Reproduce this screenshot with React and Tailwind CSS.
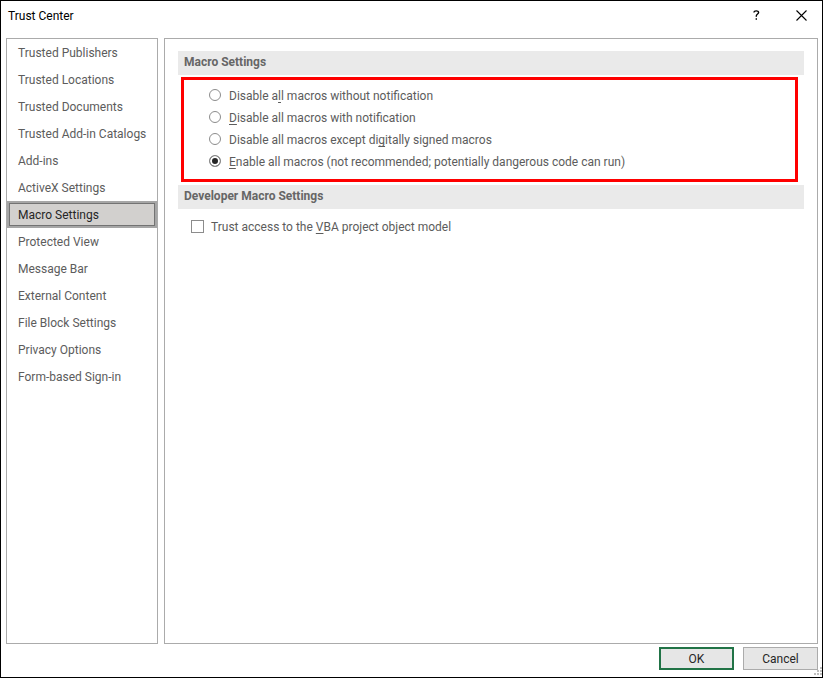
import React, { useState } from "react";

const categories = [
  "Trusted Publishers",
  "Trusted Locations",
  "Trusted Documents",
  "Trusted Add-in Catalogs",
  "Add-ins",
  "ActiveX Settings",
  "Macro Settings",
  "Protected View",
  "Message Bar",
  "External Content",
  "File Block Settings",
  "Privacy Options",
  "Form-based Sign-in",
];

// the access key letter sits between "before" and "after"
const macroOptions = [
  { id: "silent", before: "Disable a", accessKey: "l", after: "l macros without notification" },
  { id: "notify", before: "", accessKey: "D", after: "isable all macros with notification" },
  { id: "signed", before: "Disable all macros except di", accessKey: "g", after: "itally signed macros" },
  { id: "enable", before: "", accessKey: "E", after: "nable all macros (not recommended; potentially dangerous code can run)" },
];

const AccessLabel = ({ before, accessKey, after }) => (
  <span>
    {before}
    <span className="underline underline-offset-2 [text-decoration-skip-ink:none]">{accessKey}</span>
    {after}
  </span>
);

const SectionTitle = ({ children }) => (
  <h2 className="h-6 px-1.5 bg-[#eaeaea] font-bold leading-[22px] text-[#666666]">{children}</h2>
);

const App = () => {
  const [category, setCategory] = useState("Macro Settings");
  const [macro, setMacro] = useState("enable");
  const [trustVba, setTrustVba] = useState(false);

  return (
    <div className="relative min-h-screen flex flex-col border border-black bg-white pl-[5px] pr-1 pb-[7px] font-['Roboto','Open_Sans',sans-serif] text-[12px] leading-4 text-[#5c5c5c]">
      <header className="h-[37px] flex items-start justify-between text-black">
        <h1 className="pl-0.5 pt-[7px]">Trust Center</h1>
        <div className="flex">
          <button type="button" aria-label="Help" className="w-[55px] h-7 flex items-center justify-center">
            <svg width="7" height="10" viewBox="0 0 7 10" fill="none" stroke="currentColor" strokeWidth="1.4">
              <path d="M1 2.6C1 1.4 1.9.9 3.2.9S5.6 1.5 5.6 2.6C5.6 4 3.3 4.2 3.3 6v.8" />
              <path d="M3.3 8.2v1.6" />
            </svg>
          </button>
          <button type="button" aria-label="Close" className="w-[34px] h-7 flex items-center justify-center">
            <svg width="11" height="11" viewBox="0 0 11 11" fill="none" stroke="currentColor" strokeWidth="1.1">
              <path d="M.5.5l10 10M10.5.5l-10 10" />
            </svg>
          </button>
        </div>
      </header>

      <div className="flex-1 flex gap-1.5">
        <nav className="w-[152px] shrink-0 flex flex-col border border-[#ababab]">
          {categories.map((name) => (
            <button
              key={name}
              type="button"
              onClick={() => setCategory(name)}
              className={
                name === category
                  ? "h-[27px] border-2 border-[#a6a6a6] bg-[#d2d0ce] text-left text-[#262626]"
                  : "h-[27px] border-2 border-transparent text-left"
              }
            >
              <span
                className={
                  name === category
                    ? "h-full flex items-center border border-[#737373] pl-2 whitespace-nowrap"
                    : "h-full flex items-center border border-transparent pl-2 whitespace-nowrap"
                }
              >
                {name}
              </span>
            </button>
          ))}
        </nav>

        <main className="flex-1 border border-[#ababab] px-[13px] pt-3">
          <SectionTitle>Macro Settings</SectionTitle>
          <div
            role="radiogroup"
            aria-label="Macro Settings"
            className="mt-0.5 mb-[3px] ml-[3px] mr-1.5 border-3 border-[#ff0000] pt-[5px] pb-1.5 pl-[25px]"
          >
            {macroOptions.map((option) => (
              <label key={option.id} className="h-[22px] flex items-center gap-2">
                <input
                  type="radio"
                  name="macro"
                  checked={macro === option.id}
                  onChange={() => setMacro(option.id)}
                  className="appearance-none size-3 mb-0.5 shrink-0 rounded-full border border-[#8c8c8c] bg-white checked:bg-[#262626] checked:shadow-[inset_0_0_0_2px_white]"
                />
                <AccessLabel {...option} />
              </label>
            ))}
          </div>
          <SectionTitle>Developer Macro Settings</SectionTitle>
          <label className="h-[35px] flex items-center gap-[7px] pl-[13px]">
            <input
              type="checkbox"
              checked={trustVba}
              onChange={(e) => setTrustVba(e.target.checked)}
              className="appearance-none size-[13px] shrink-0 border border-[#8c8c8c] bg-white checked:bg-[#262626] checked:shadow-[inset_0_0_0_2px_white]"
            />
            <AccessLabel before="Trust access to the " accessKey="V" after="BA project object model" />
          </label>
        </main>
      </div>

      <footer className="mt-[3px] flex justify-end gap-[9px] text-[#262626]">
        <button type="button" className="w-[75px] h-[23px] border-2 border-[#217346] bg-[#e6e6e6]">
          OK
        </button>
        <button type="button" className="w-[75px] h-[23px] border border-[#ababab] bg-[#e6e6e6]">
          Cancel
        </button>
      </footer>

      {/* resize grip */}
      <svg className="absolute right-0 bottom-0.5" width="8" height="8" viewBox="0 0 8 8" fill="#bfbfbf">
        <path d="M6 0h2v2H6zM3 3h2v2H3zM6 3h2v2H6zM0 6h2v2H0zM3 6h2v2H3zM6 6h2v2H6z" />
      </svg>
    </div>
  );
};

export default App;
